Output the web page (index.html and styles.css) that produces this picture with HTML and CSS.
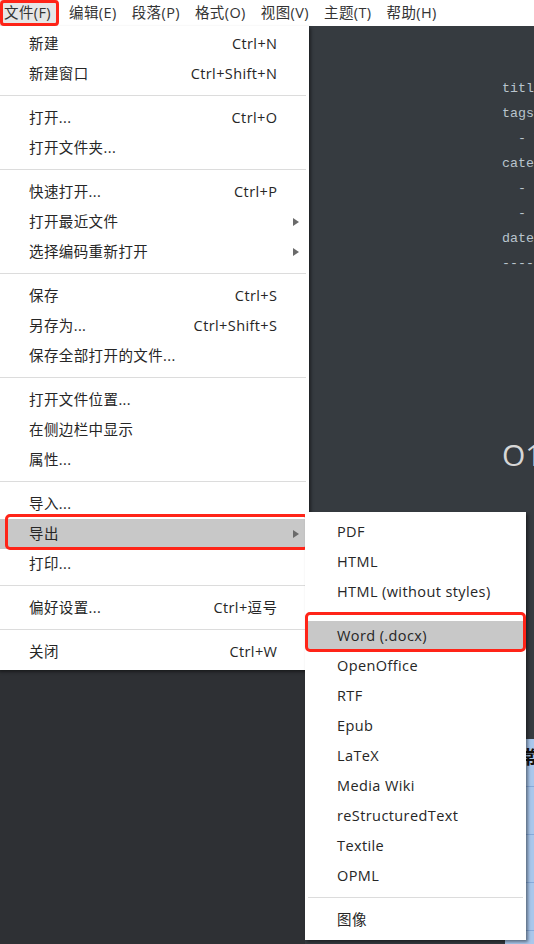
FILE: index.html
```html
<!DOCTYPE html>
<html lang="zh-CN">
<head>
    <meta charset="UTF-8">
    <meta name="viewport" content="width=device-width, initial-scale=1.0">
    <title>Typora - 文件菜单</title>
    <link rel="stylesheet" href="styles.css">
</head>
<body>

<header class="menubar">
    <span class="menubar-item is-open">文件(F)</span>
    <span class="menubar-item">编辑(E)</span>
    <span class="menubar-item">段落(P)</span>
    <span class="menubar-item">格式(O)</span>
    <span class="menubar-item">视图(V)</span>
    <span class="menubar-item">主题(T)</span>
    <span class="menubar-item">帮助(H)</span>
</header>

<div class="window">
    <aside class="sidebar"></aside>
    <main class="editor">
        <pre class="front-matter">title: Typora 导出 Word
tags:
  - Typora
categories:
  - 工具
  - 教程
date: 2020-05-12 10:30:00
------------------------</pre>
        <h2 class="heading">O1 导出为 Word</h2>
        <div class="figure">
            <div class="figure-title">常用格式</div>
        </div>
    </main>
</div>

<!-- 文件菜单 -->
<nav class="menu file-menu">
    <div class="menu-row"><span class="label">新建</span><span class="key">Ctrl+N</span><span class="arrow"></span></div>
    <div class="menu-row"><span class="label">新建窗口</span><span class="key">Ctrl+Shift+N</span><span class="arrow"></span></div>
    <div class="menu-sep"></div>
    <div class="menu-row"><span class="label">打开...</span><span class="key">Ctrl+O</span><span class="arrow"></span></div>
    <div class="menu-row"><span class="label">打开文件夹...</span><span class="key"></span><span class="arrow"></span></div>
    <div class="menu-sep"></div>
    <div class="menu-row"><span class="label">快速打开...</span><span class="key">Ctrl+P</span><span class="arrow"></span></div>
    <div class="menu-row"><span class="label">打开最近文件</span><span class="key"></span><span class="arrow has-sub"></span></div>
    <div class="menu-row"><span class="label">选择编码重新打开</span><span class="key"></span><span class="arrow has-sub"></span></div>
    <div class="menu-sep"></div>
    <div class="menu-row"><span class="label">保存</span><span class="key">Ctrl+S</span><span class="arrow"></span></div>
    <div class="menu-row"><span class="label">另存为...</span><span class="key">Ctrl+Shift+S</span><span class="arrow"></span></div>
    <div class="menu-row"><span class="label">保存全部打开的文件...</span><span class="key"></span><span class="arrow"></span></div>
    <div class="menu-sep"></div>
    <div class="menu-row"><span class="label">打开文件位置...</span><span class="key"></span><span class="arrow"></span></div>
    <div class="menu-row"><span class="label">在侧边栏中显示</span><span class="key"></span><span class="arrow"></span></div>
    <div class="menu-row"><span class="label">属性...</span><span class="key"></span><span class="arrow"></span></div>
    <div class="menu-sep"></div>
    <div class="menu-row"><span class="label">导入...</span><span class="key"></span><span class="arrow"></span></div>
    <div class="menu-row is-active is-marked"><span class="label">导出</span><span class="key"></span><span class="arrow has-sub"></span></div>
    <div class="menu-row"><span class="label">打印...</span><span class="key"></span><span class="arrow"></span></div>
    <div class="menu-sep"></div>
    <div class="menu-row"><span class="label">偏好设置...</span><span class="key">Ctrl+逗号</span><span class="arrow"></span></div>
    <div class="menu-sep"></div>
    <div class="menu-row"><span class="label">关闭</span><span class="key">Ctrl+W</span><span class="arrow"></span></div>
</nav>

<!-- 导出子菜单 -->
<nav class="menu export-menu">
    <div class="menu-row"><span class="label">PDF</span></div>
    <div class="menu-row"><span class="label">HTML</span></div>
    <div class="menu-row"><span class="label">HTML (without styles)</span></div>
    <div class="menu-sep"></div>
    <div class="menu-row is-active is-marked-wide"><span class="label">Word (.docx)</span></div>
    <div class="menu-row"><span class="label">OpenOffice</span></div>
    <div class="menu-row"><span class="label">RTF</span></div>
    <div class="menu-row"><span class="label">Epub</span></div>
    <div class="menu-row"><span class="label">LaTeX</span></div>
    <div class="menu-row"><span class="label">Media Wiki</span></div>
    <div class="menu-row"><span class="label">reStructuredText</span></div>
    <div class="menu-row"><span class="label">Textile</span></div>
    <div class="menu-row"><span class="label">OPML</span></div>
    <div class="menu-sep"></div>
    <div class="menu-row"><span class="label">图像</span></div>
</nav>

</body>
</html>
```

FILE: styles.css
```css
body {
    margin: 0;
    width: 534px;
    height: 944px;
    overflow: hidden;
    position: relative;
    font-family: "Open Sans", "Noto Sans CJK SC", sans-serif;
    font-size: 14.5px;
    letter-spacing: 0.4px;
    color: #262626;
    background-color: #363b40;
}

/* barra de menu */
.menubar {
    height: 26px;
    display: flex;
    align-items: center;
    gap: 7px;
    background-color: #ffffff;
    line-height: 26px;
}

.menubar-item {
    padding: 0 4px;
    color: #333;
    white-space: nowrap;
}

.menubar-item.is-open {
    position: relative;
    padding-right: 7px;
    background-color: #e6e6e6;
}

.menubar-item.is-open::after {
    content: '';
    position: absolute;
    top: 0;
    left: 0;
    right: -1px;
    bottom: 0;
    border: 3px solid #ff2418;
    border-radius: 4px;
}

/* fondo */
.window {
    display: flex;
    height: 918px;
}

.sidebar {
    width: 305px;
    flex-shrink: 0;
    background-color: #2e3034;
}

.editor {
    flex: 1;
    overflow: hidden;
    background-color: #363b40;
    padding: 50px 0 0 197px;
    min-width: 0;
}

.front-matter {
    margin: 0;
    font-family: "Liberation Mono", "Noto Sans CJK SC", monospace;
    font-size: 13.3px;
    letter-spacing: 0;
    line-height: 25px;
    color: #b9c4cd;
    white-space: pre;
}

.heading {
    margin: 159px 0 0 0;
    font-family: "Open Sans", "Noto Sans CJK SC", sans-serif;
    font-weight: 400;
    font-size: 30px;
    letter-spacing: 0;
    line-height: 40px;
    color: #d6d6d6;
    white-space: nowrap;
}

.figure {
    margin: 264px 0 0 3px;
    width: 400px;
    height: 206px;
    background: repeating-linear-gradient(to bottom, #a9c7ec 0, #a9c7ec 47px, #86aadb 47px, #86aadb 48px);
}

.figure-title {
    padding: 4px 0 0 14px;
    font-size: 18px;
    font-weight: 700;
    color: #111;
    white-space: nowrap;
}

/* menus */
.menu {
    position: absolute;
    background-color: #ffffff;
    box-shadow: 2px 2px 3px rgba(0, 0, 0, 0.45);
}

.file-menu {
    top: 26px;
    left: -3px;
    width: 312px;
    padding: 3px 0;
}

.export-menu {
    top: 512px;
    left: 305px;
    width: 221px;
    padding: 5px 0;
}

.menu-row {
    display: flex;
    align-items: center;
    height: 30px;
    line-height: 30px;
    margin: 0 3px;
    padding: 0 7px 0 29px;
    white-space: nowrap;
    position: relative;
}

.menu-row .label {
    flex: 1;
}

.menu-row .key {
    margin-right: -0.4px;
}

.menu-row .arrow {
    width: 22px;
    display: flex;
    justify-content: flex-end;
}

.menu-row .arrow.has-sub::before {
    content: '';
    width: 0;
    height: 0;
    border-left: 6px solid #6a6a6a;
    border-top: 4.5px solid transparent;
    border-bottom: 4.5px solid transparent;
}

.menu-row.is-active {
    background-color: #c8c8c8;
}

.file-menu .menu-row.is-active {
    margin-left: 0;
    padding-left: 32px;
}

.menu-row.is-marked::after {
    content: '';
    position: absolute;
    top: -5px;
    bottom: -1px;
    left: 8px;
    right: -3px;
    border: 3px solid #ff2418;
    border-radius: 5px;
}

.menu-row.is-marked-wide::after {
    content: '';
    position: absolute;
    top: -9px;
    bottom: -1px;
    left: -3px;
    right: -3px;
    border: 3px solid #ff2418;
    border-radius: 5px;
}

.menu-sep {
    height: 1px;
    margin: 6px 3px 7px 3px;
    background-color: #dcdcdc;
}
```
